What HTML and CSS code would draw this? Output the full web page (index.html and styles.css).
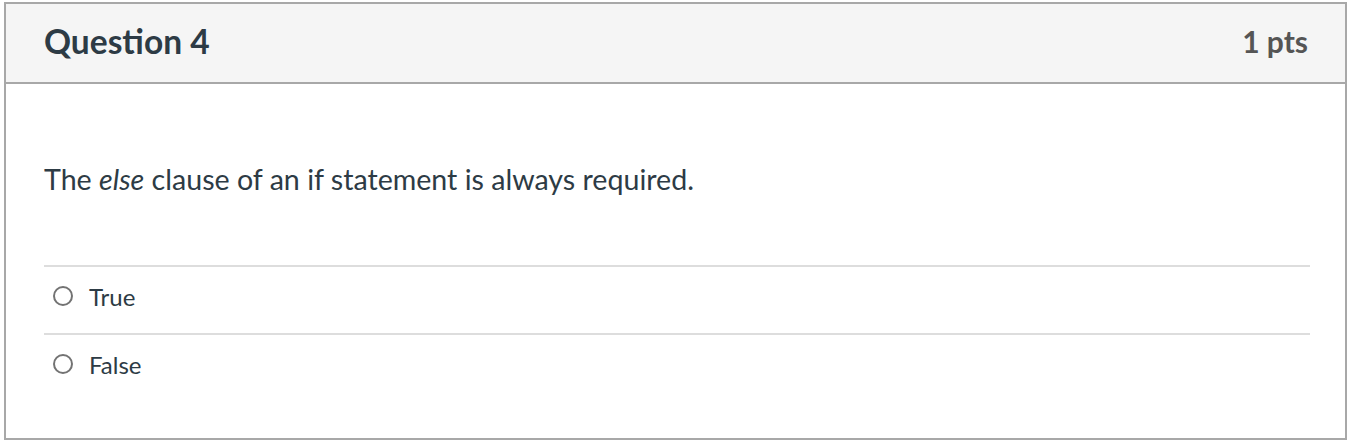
FILE: index.html
```html
<!DOCTYPE html>
<html>
<head>
<meta charset="utf-8">
<link rel="stylesheet" href="styles.css">
</head>
<body>
<div class="page">
  <div class="question">
    <div class="q-header">
      <div class="q-title">Question 4</div>
      <div class="q-points">1 pts</div>
    </div>
    <div class="q-body">
      <div class="q-text">The <em>else</em> clause of an if statement is always required.</div>
      <div class="answers">
        <div class="answer"><span class="radio"></span><span class="label">True</span></div>
        <div class="answer"><span class="radio"></span><span class="label">False</span></div>
      </div>
    </div>
  </div>
</div>
</body>
</html>
```
FILE: styles.css
```css
html, body {
  margin: 0;
  padding: 0;
  background: #ffffff;
}
body {
  font-family: Lato, "Open Sans", sans-serif;
  color: #2d3b45;
}
.page {
  padding: 2px 1px 0 4px;
}
.question {
  border: 2px solid #a8a8a8;
  height: 434px;
  box-sizing: content-box;
}
.q-header {
  background: #f5f5f5;
  height: 80px;
  border-bottom: 2px solid #a8a8a8;
  display: flex;
  align-items: center;
  justify-content: space-between;
  padding: 0 37px 0 38px;
  box-sizing: border-box;
}
.q-title {
  font-size: 33.5px;
  font-weight: 700;
  color: #2d3b45;
  padding-bottom: 4px;
}
.q-points {
  font-size: 30px;
  font-weight: 700;
  color: #555555;
  padding-bottom: 4px;
}
.q-body {
  padding: 0 35px 0 38px;
}
.q-text {
  font-size: 28.6px;
  line-height: 36px;
  padding-top: 77px;
  padding-bottom: 68px;
}
.q-text em {
  font-style: italic;
}
.answers {
  border-top: 2px solid #dddddd;
}
.answer {
  display: flex;
  align-items: center;
  height: 66px;
  padding-left: 9px;
  padding-bottom: 8px;
  box-sizing: border-box;
}
.answer + .answer {
  border-top: 2px solid #dddddd;
  height: 68px;
}
.radio {
  width: 16px;
  height: 16px;
  border: 2px solid #737373;
  border-radius: 50%;
  flex: none;
}
.label {
  margin-left: 16px;
  font-size: 24px;
}
```
